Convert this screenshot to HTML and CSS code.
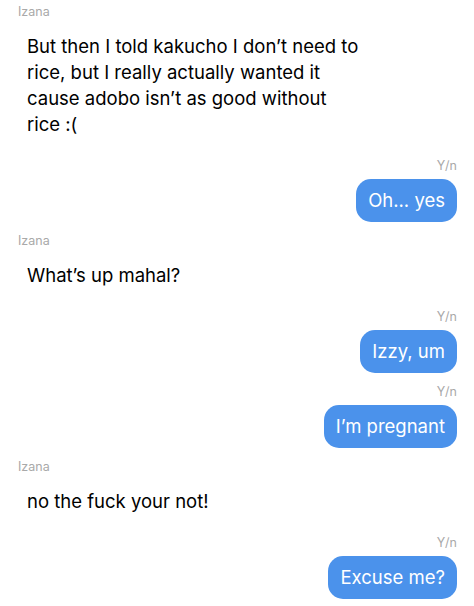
FILE: index.html
```html
<!DOCTYPE html>
<html lang="en">

<head>
    <meta charset="UTF-8">
    <title>Izana</title>
    <link rel="stylesheet" href="styles.css">
</head>

<body>
    <main class="chat">
        <div class="besked modtaget">
            <span class="navn">Izana</span>
            <p class="boble">But then I told kakucho I don’t need to rice, but I really actually wanted it cause adobo isn’t as good without rice :(</p>
        </div>
        <div class="besked sendt">
            <span class="navn">Y/n</span>
            <p class="boble">Oh... yes</p>
        </div>
        <div class="besked modtaget">
            <span class="navn">Izana</span>
            <p class="boble">What’s up mahal?</p>
        </div>
        <div class="besked sendt">
            <span class="navn">Y/n</span>
            <p class="boble">Izzy, um</p>
        </div>
        <div class="besked sendt">
            <span class="navn">Y/n</span>
            <p class="boble">I’m pregnant</p>
        </div>
        <div class="besked modtaget">
            <span class="navn">Izana</span>
            <p class="boble">no the fuck your not!</p>
        </div>
        <div class="besked sendt">
            <span class="navn">Y/n</span>
            <p class="boble">Excuse me?</p>
        </div>
    </main>
</body>

</html>
```
FILE: styles.css
```css
* {
    font-family: Inter, "Liberation Sans", sans-serif;
    box-sizing: border-box;
}

body {
    background-color: #fff;
    margin: 0;
}

.chat {
    display: flex;
    flex-direction: column;
    gap: 11px;
    padding: 4px 17px 0 18px;
}

.besked {
    display: flex;
    flex-direction: column;
}

.navn {
    font-size: 12.5px;
    line-height: 16px;
    color: #a9a9a9;
}

.boble {
    margin: 0;
    font-size: 18.5px;
    line-height: 26px;
    border-radius: 15px;
}

.modtaget {
    align-items: flex-start;
    gap: 3px;
}

.modtaget .boble {
    color: #000;
    padding: 10px 9px;
    max-width: 350px;
}

.sendt {
    align-items: flex-end;
    gap: 5px;
}

.sendt .boble {
    color: #fff;
    background-color: #4b92eb;
    line-height: 25px;
    padding: 9px 12px;
}
```
